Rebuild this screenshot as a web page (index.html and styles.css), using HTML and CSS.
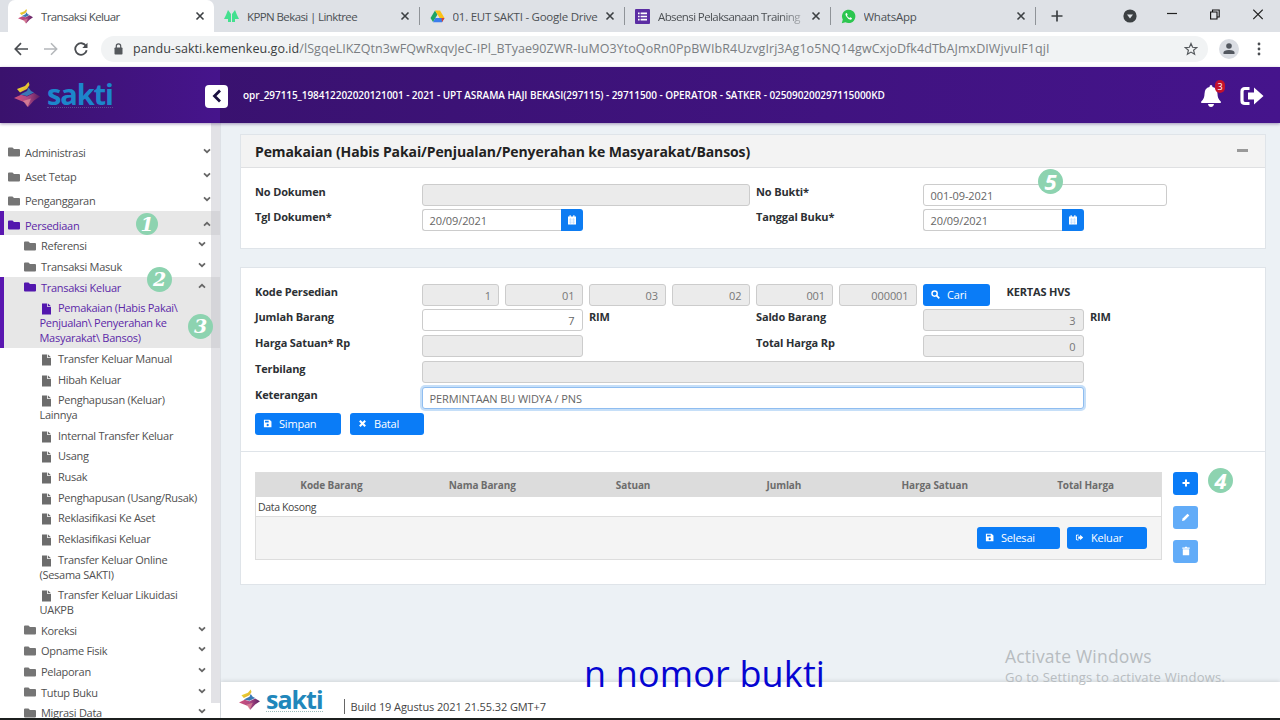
FILE: index.html
```html
<!DOCTYPE html>
<html lang="id">
<head>
    <meta charset="UTF-8">
    <meta name="viewport" content="width=device-width, initial-scale=1.0">
    <title>Transaksi Keluar</title>
    <link rel="stylesheet" href="styles.css">
</head>
<body>

    <!-- icons -->
    <svg class="sprite">
        <defs>
            <linearGradient id="logo-top" x1="0" y1="0" x2="1" y2="1">
                <stop offset="0" stop-color="#f6f03a"/>
                <stop offset="1" stop-color="#d8a02c"/>
            </linearGradient>
            <linearGradient id="logo-base" x1="0" y1="0" x2="1" y2="0">
                <stop offset="0" stop-color="#d0507a"/>
                <stop offset="0.5" stop-color="#b04a84"/>
                <stop offset="1" stop-color="#5a1e62"/>
            </linearGradient>
        </defs>
        <symbol id="logo" viewBox="0 0 26 26">
            <path d="M3 7 L11 4 L14.500 0 L15.500 3 L13 7 L6 10.500 Z" fill="url(#logo-top)"/>
            <path d="M14.500 5.500 L17 9 L20 10.500 L13 14 L6 12.500 L13 9 Z" fill="#3a78b4"/>
            <path d="M0 16 L7 12.800 L13 14.500 L20 11 L26 14.500 L20 18.500 L14 25 L11 20.500 Z" fill="url(#logo-base)"/>
            <path d="M9 19 L17 16.500 L13.500 25 Z" fill="#f0a0a0" opacity="0.55"/>
        </symbol>
        <symbol id="close" viewBox="0 0 10 10"><path d="M1.5 1.5 L8.5 8.5 M8.5 1.5 L1.5 8.5" stroke="#3c4043" stroke-width="1.6"/></symbol>
        <symbol id="folder" viewBox="0 0 12 10"><path d="M0 1.5 Q0 .5 1 .5 H4.5 L6 2 H11 Q12 2 12 3 V8.5 Q12 9.5 11 9.5 H1 Q0 9.5 0 8.5 Z" fill="currentColor"/></symbol>
        <symbol id="file" viewBox="0 0 9 12"><path d="M0 .5 H5.2 V4 H9 V11.5 H0 Z M6 .5 L9 3.3 H6 Z" fill="currentColor"/></symbol>
        <symbol id="down" viewBox="0 0 8 6"><path d="M1 1.3 L4 4.2 L7 1.3" fill="none" stroke="currentColor" stroke-width="1.7"/></symbol>
        <symbol id="up" viewBox="0 0 8 6"><path d="M1 4.7 L4 1.8 L7 4.7" fill="none" stroke="currentColor" stroke-width="1.7"/></symbol>
        <symbol id="calendar" viewBox="0 0 10 10"><path d="M1 1.5 H2.5 V.3 H3.8 V1.5 H6.2 V.3 H7.5 V1.5 H9 V9.5 H1 Z" fill="#fff"/><path d="M2 4.3 H8 M2 6 H8 M2 7.7 H8 M3.5 3 V9 M6.5 3 V9" stroke="#9cccff" stroke-width=".4"/></symbol>
        <symbol id="save" viewBox="0 0 10 10"><path fill-rule="evenodd" d="M1 .8 H7.3 L9.4 2.8 V9.2 H1 Z M2.3 2 V4 H6.3 V2 Z M5.2 5.4 A1.3 1.3 0 1 0 5.21 5.4 Z" fill="#fff"/></symbol>
        <symbol id="times" viewBox="0 0 10 10"><path d="M2 2 L8 8 M8 2 L2 8" stroke="#fff" stroke-width="2.3"/></symbol>
        <symbol id="search" viewBox="0 0 10 10"><circle cx="4" cy="4" r="2.9" fill="none" stroke="#fff" stroke-width="1.6"/><path d="M6 6 L9.2 9.2" stroke="#fff" stroke-width="1.9"/></symbol>
        <symbol id="signout" viewBox="0 0 24 20"><path d="M9.500 2.500 H5 Q2 2.500 2 5.500 V14.500 Q2 17.500 5 17.500 H9.500" fill="none" stroke="#fff" stroke-width="3.2"/><path d="M8 6.500 H14 V1.500 L23.500 10 L14 18.500 V13.500 H8 Z" fill="#fff"/></symbol>
    </svg>

    <!-- browser -->
    <div class="tabs">
        <div class="tab active">
            <svg class="tab-icon"><use href="#logo"/></svg>
            <span class="tab-title narrow">Transaksi Keluar</span>
            <svg class="tab-close"><use href="#close"/></svg>
        </div>
        <div class="tab">
            <svg class="tab-icon" viewBox="0 0 15 15"><path d="M4 1 L7 5 V13 H4 V10 H0 L2 6 Z M11 1 L8 5 V13 H11 V10 H15 L13 6 Z" fill="#43e08f"/></svg>
            <span class="tab-title narrow">KPPN Bekasi | Linktree</span>
            <svg class="tab-close"><use href="#close"/></svg>
        </div>
        <div class="tab">
            <svg class="tab-icon" viewBox="0 0 15 15"><path d="M5 1.5 L7.5 5.5 L3 13 L.5 9 Z" fill="#1fa463"/><path d="M5 1.5 H10 L14.5 9 H9.6 Z" fill="#fbc116"/><path d="M5.3 9 H14.5 L12 13.3 H3 Z" fill="#3b7ded"/><path d="M11.5 9 H14.5 L12 13.3 Z" fill="#e0402f"/></svg>
            <span class="tab-title">01. EUT SAKTI - Google Drive</span>
            <svg class="tab-close"><use href="#close"/></svg>
        </div>
        <div class="tab">
            <svg class="tab-icon" viewBox="0 0 15 15"><rect width="15" height="15" rx="1" fill="#5b2da3"/><path d="M3 4.3 H4.6 M3 7.5 H4.6 M3 10.7 H4.6 M5.6 4.3 H12 M5.6 7.5 H12 M5.6 10.7 H12" stroke="#fff" stroke-width="1.7"/></svg>
            <span class="tab-title narrow fade">Absensi Pelaksanaan Training</span>
            <svg class="tab-close"><use href="#close"/></svg>
        </div>
        <div class="tab">
            <svg class="tab-icon" viewBox="0 0 15 15"><path d="M.8 14.2 L1.8 10.6 A6.7 6.7 0 1 1 4.4 13.2 Z" fill="#2cc64f"/><path d="M5 4 Q3.8 5 5 7 Q7 10.4 9.6 10.8 Q11 10.6 11 9.2 L9.3 8.2 L8.4 9 Q6.8 8.2 6 6.7 L6.6 5.8 L6 4.2 Z" fill="#fff"/></svg>
            <span class="tab-title">WhatsApp</span>
            <svg class="tab-close"><use href="#close"/></svg>
        </div>
        <svg class="new-tab" viewBox="0 0 12 12"><path d="M6 .5 V11.5 M.5 6 H11.5" stroke="#3c4043" stroke-width="1.7"/></svg>
        <div class="window-buttons">
            <svg width="14" height="14" viewBox="0 0 14 14"><circle cx="7" cy="7" r="6.6" fill="#3c4043"/><path d="M4 5.5 H10 L7 9.5 Z" fill="#dee1e6"/></svg>
            <svg width="10" height="14" viewBox="0 0 10 14"><path d="M0 4.500 H10" stroke="#222" stroke-width="1.2"/></svg>
            <svg width="10" height="14" viewBox="0 0 10 14"><path d="M.6 3 H7 V10 H.6 Z M2.5 3 V1 H9.2 V8 H7" fill="none" stroke="#111" stroke-width="1.1"/></svg>
            <svg width="10" height="14" viewBox="0 0 10 14"><path d="M.3 .7 L9.7 10 M9.7 .7 L.3 10" stroke="#222" stroke-width="1.1"/></svg>
        </div>
    </div>

    <div class="toolbar">
        <svg class="nav-icon" viewBox="0 0 14 14"><path d="M14 7 H1.5 M7 1.2 L1.3 7 L7 12.8" fill="none" stroke="#4a4d51" stroke-width="1.7"/></svg>
        <svg class="nav-icon" viewBox="0 0 14 14"><path d="M0 7 H12.5 M7 1.2 L12.7 7 L7 12.8" fill="none" stroke="#b4b7ba" stroke-width="1.5"/></svg>
        <svg class="nav-icon" viewBox="0 0 14 14"><path d="M12 4 A5.8 5.8 0 1 0 12.7 8.3" fill="none" stroke="#4a4d51" stroke-width="1.8"/><path d="M13.5 .8 V6 H8.3 Z" fill="#4a4d51"/></svg>
        <div class="address">
            <svg class="lock" viewBox="0 0 9 12"><rect x=".5" y="4.5" width="8" height="7" rx=".8" fill="#54585c"/><path d="M2.3 5 V3 A2.2 2.2 0 0 1 6.7 3 V5" fill="none" stroke="#54585c" stroke-width="1.2"/></svg>
            <span class="url"><b>pandu-sakti.kemenkeu.go.id</b>/lSgqeLIKZQtn3wFQwRxqvJeC-IPl_BTyae90ZWR-IuMO3YtoQoRn0PpBWIbR4UzvgIrj3Ag1o5NQ14gwCxjoDfk4dTbAJmxDIWjvuIF1qjI</span>
            <svg class="bookmark" viewBox="0 0 14 14"><path d="M7 1.5 L8.6 5.3 L12.7 5.6 L9.6 8.3 L10.6 12.3 L7 10.1 L3.4 12.3 L4.4 8.3 L1.3 5.6 L5.4 5.3 Z" fill="none" stroke="#55595d" stroke-width="1.2"/></svg>
        </div>
        <svg class="profile" viewBox="0 0 20 20"><circle cx="10" cy="10" r="10" fill="#dadde3"/><circle cx="10" cy="7" r="2.8" fill="#52575f"/><path d="M4.5 15 V13.6 Q4.5 11 10 11 Q15.500 11 15.500 13.600 V15 Z" fill="#52575f"/></svg>
        <svg class="dots" viewBox="0 0 4 14"><circle cx="2" cy="2" r="1.4"/><circle cx="2" cy="7" r="1.4"/><circle cx="2" cy="12" r="1.4"/></svg>
    </div>

    <!-- app header -->
    <header class="navbar">
        <div class="brand">
            <svg class="brand-icon"><use href="#logo"/></svg>
            <span class="brand-name">sakti</span>
        </div>
        <button class="collapse"><svg viewBox="0 0 10 14"><path d="M8 1.5 L2.500 7 L8 12.5" fill="none" stroke="#1a1040" stroke-width="2.8"/></svg></button>
        <span class="user-info">opr_297115_198412202020121001 - 2021 - UPT ASRAMA HAJI BEKASI(297115) - 29711500 - OPERATOR - SATKER - 025090200297115000KD</span>
        <div class="bell">
            <svg viewBox="0 0 20 22"><path d="M10 0 Q11.500 0 11.500 2 Q16.500 3 16.500 9 Q16.500 14 19.800 16.500 V18 H.2 V16.500 Q3.500 14 3.500 9 Q3.500 3 8.500 2 Q8.500 0 10 0 Z M7 19 H13 Q12.500 22 10 22 Q7.500 22 7 19 Z" fill="#fff"/></svg>
            <span class="count">3</span>
        </div>
        <svg class="logout"><use href="#signout"/></svg>
    </header>

    <div class="page">
        <nav class="sidebar">
            <ul class="menu">
                <li class="row"><svg class="folder"><use href="#folder"/></svg>Administrasi<svg class="arrow"><use href="#down"/></svg></li>
                <li class="row"><svg class="folder"><use href="#folder"/></svg>Aset Tetap<svg class="arrow"><use href="#down"/></svg></li>
                <li class="row"><svg class="folder"><use href="#folder"/></svg>Penganggaran<svg class="arrow"><use href="#down"/></svg></li>
                <li class="row selected"><svg class="folder"><use href="#folder"/></svg>Persediaan<svg class="arrow"><use href="#up"/></svg></li>
            </ul>
            <ul class="submenu">
                <li class="row"><svg class="folder"><use href="#folder"/></svg>Referensi<svg class="arrow"><use href="#down"/></svg></li>
                <li class="row"><svg class="folder"><use href="#folder"/></svg>Transaksi Masuk<svg class="arrow"><use href="#down"/></svg></li>
                <li class="row selected"><svg class="folder"><use href="#folder"/></svg>Transaksi Keluar<svg class="arrow"><use href="#up"/></svg></li>
                <li class="leaf selected"><svg class="file"><use href="#file"/></svg>Pemakaian (Habis Pakai\<br>Penjualan\ Penyerahan ke<br>Masyarakat\ Bansos)</li>
                <li class="leaf"><svg class="file"><use href="#file"/></svg>Transfer Keluar Manual</li>
                <li class="leaf"><svg class="file"><use href="#file"/></svg>Hibah Keluar</li>
                <li class="leaf"><svg class="file"><use href="#file"/></svg>Penghapusan (Keluar)<br>Lainnya</li>
                <li class="leaf"><svg class="file"><use href="#file"/></svg>Internal Transfer Keluar</li>
                <li class="leaf"><svg class="file"><use href="#file"/></svg>Usang</li>
                <li class="leaf"><svg class="file"><use href="#file"/></svg>Rusak</li>
                <li class="leaf"><svg class="file"><use href="#file"/></svg>Penghapusan (Usang/Rusak)</li>
                <li class="leaf"><svg class="file"><use href="#file"/></svg>Reklasifikasi Ke Aset</li>
                <li class="leaf"><svg class="file"><use href="#file"/></svg>Reklasifikasi Keluar</li>
                <li class="leaf"><svg class="file"><use href="#file"/></svg>Transfer Keluar Online<br>(Sesama SAKTI)</li>
                <li class="leaf"><svg class="file"><use href="#file"/></svg>Transfer Keluar Likuidasi<br>UAKPB</li>
                <li class="row"><svg class="folder"><use href="#folder"/></svg>Koreksi<svg class="arrow"><use href="#down"/></svg></li>
                <li class="row"><svg class="folder"><use href="#folder"/></svg>Opname Fisik<svg class="arrow"><use href="#down"/></svg></li>
                <li class="row"><svg class="folder"><use href="#folder"/></svg>Pelaporan<svg class="arrow"><use href="#down"/></svg></li>
                <li class="row"><svg class="folder"><use href="#folder"/></svg>Tutup Buku<svg class="arrow"><use href="#down"/></svg></li>
                <li class="row"><svg class="folder"><use href="#folder"/></svg>Migrasi Data<svg class="arrow"><use href="#down"/></svg></li>
            </ul>
            <div class="scrollbar"></div>
        </nav>

        <div class="main">
            <div class="content">
                <section class="card">
                    <div class="card-header">
                        <h1>Pemakaian (Habis Pakai/Penjualan/Penyerahan ke Masyarakat/Bansos)</h1>
                        <span class="minus"></span>
                    </div>
                    <div class="form form-top">
                        <label class="w2">No Dokumen</label>
                        <div class="input w4 disabled"></div>
                        <label class="w2">No Bukti*</label>
                        <div class="input w3">001-09-2021</div>
                        <label class="w2 new-row">Tgl Dokumen*</label>
                        <div class="date w4"><div class="input">20/09/2021</div><button class="pick"><svg><use href="#calendar"/></svg></button></div>
                        <label class="w2">Tanggal Buku*</label>
                        <div class="date w4"><div class="input">20/09/2021</div><button class="pick"><svg><use href="#calendar"/></svg></button></div>
                    </div>
                </section>

                <section class="card detail">
                    <div class="form">
                        <label class="w2">Kode Persedian</label>
                        <div class="input disabled num">1</div>
                        <div class="input disabled num">01</div>
                        <div class="input disabled num">03</div>
                        <div class="input disabled num">02</div>
                        <div class="input disabled num">001</div>
                        <div class="input disabled num">000001</div>
                        <button class="btn cari"><svg><use href="#search"/></svg>Cari</button>
                        <label class="w3">KERTAS HVS</label>

                        <label class="w2 new-row">Jumlah Barang</label>
                        <div class="input w2 num">7</div>
                        <label class="w2">RIM</label>
                        <label class="w2">Saldo Barang</label>
                        <div class="input w2 disabled num">3</div>
                        <label class="w2">RIM</label>

                        <label class="w2 new-row">Harga Satuan* Rp</label>
                        <div class="input w2 disabled"></div>
                        <label class="w2"></label>
                        <label class="w2">Total Harga Rp</label>
                        <div class="input w2 disabled num">0</div>

                        <label class="w2 new-row">Terbilang</label>
                        <div class="input w8 disabled"></div>

                        <label class="w2 new-row">Keterangan</label>
                        <div class="input w8 focus">PERMINTAAN BU WIDYA / PNS</div>
                    </div>
                    <div class="actions">
                        <button class="btn simpan"><svg><use href="#save"/></svg>Simpan</button>
                        <button class="btn batal"><svg><use href="#times"/></svg>Batal</button>
                    </div>
                    <div class="table-area">
                        <div class="table">
                            <div class="thead">
                                <span>Kode Barang</span>
                                <span>Nama Barang</span>
                                <span>Satuan</span>
                                <span>Jumlah</span>
                                <span>Harga Satuan</span>
                                <span>Total Harga</span>
                            </div>
                            <div class="empty">Data Kosong</div>
                            <div class="tfoot">
                                <button class="btn selesai"><svg><use href="#save"/></svg>Selesai</button>
                                <button class="btn keluar"><svg viewBox="-2 -2 28 24"><use href="#signout" width="24" height="20"/></svg>Keluar</button>
                            </div>
                        </div>
                        <div class="tools">
                            <button class="tool"><svg viewBox="0 0 10 10"><path d="M5 1.500 V8.500 M1.500 5 H8.500" stroke="#fff" stroke-width="2"/></svg></button>
                            <button class="tool off"><svg viewBox="0 0 10 10"><path d="M1 9 L1.600 6.600 L6.500 1.800 L8.300 3.500 L3.400 8.400 Z" fill="#fff"/></svg></button>
                            <button class="tool off"><svg viewBox="0 0 10 10"><path d="M1.300 1.500 H3.800 L4.200 .8 H5.800 L6.200 1.500 H8.700 V2.700 H1.300 Z M1.800 3.200 H8.200 V9.300 H1.800 Z" fill="#fff"/></svg></button>
                        </div>
                    </div>
                </section>
            </div>

            <footer class="footer">
                <svg class="footer-icon"><use href="#logo"/></svg>
                <span class="footer-name">sakti</span>
                <span class="build">Build 19 Agustus 2021 21.55.32 GMT+7</span>
            </footer>
        </div>
    </div>
    <div class="taskbar"></div>

    <!-- tutorial overlay -->
    <span class="step serif step1">1</span>
    <span class="step serif step2">2</span>
    <span class="step serif step3">3</span>
    <span class="step step4">4</span>
    <span class="step step5">5</span>
    <div class="caption">n nomor bukti</div>
    <div class="watermark">
        <div class="watermark-title">Activate Windows</div>
        <div class="watermark-text">Go to Settings to activate Windows.</div>
    </div>

</body>
</html>
```
FILE: styles.css
```css
* {
    box-sizing: border-box;
}

body {
    position: relative;
    display: flex;
    flex-direction: column;
    width: 1280px;
    height: 720px;
    margin: 0;
    overflow: hidden;
    font-family: "Open Sans", "Noto Sans", sans-serif;
    font-size: 11px;
    color: #444;
    background: #ecf1f5;
}

svg {
    flex: none;
    display: block;
}

button {
    border: none;
    padding: 0;
    font-family: inherit;
}

ul {
    list-style: none;
    margin: 0;
    padding: 0;
}

.sprite {
    position: absolute;
    width: 0;
    height: 0;
}

/* browser tabs */
.tabs {
    flex: none;
    display: flex;
    align-items: center;
    height: 32px;
    padding-left: 8px;
    background: #dee1e6;
}

.tab {
    display: flex;
    align-items: center;
    width: 205.5px;
    height: 18px;
    padding: 0 9px 0 10px;
    border-right: 1px solid #8f9398;
    color: #4c5054;
}

.tab.active {
    width: 206px;
    height: 32px;
    background: #fff;
    border: none;
    border-radius: 7px 7px 0 0;
}

.tab-icon {
    width: 15px;
    height: 15px;
    margin-right: 8px;
}

.tab-title {
    flex: 1;
    white-space: nowrap;
    overflow: hidden;
    font-size: 11.5px;
    letter-spacing: -0.25px;
}

.tab-title.narrow {
    letter-spacing: -0.6px;
}

.tab-title.fade {
    -webkit-mask-image: linear-gradient(to right, #000 82%, rgba(0, 0, 0, 0.2));
    mask-image: linear-gradient(to right, #000 82%, rgba(0, 0, 0, 0.2));
}

.tab-close {
    width: 10px;
    height: 10px;
    margin-left: 5px;
}

.new-tab {
    width: 12px;
    height: 12px;
    margin-left: 15px;
}

.window-buttons {
    display: flex;
    gap: 33px;
    margin-left: auto;
    padding-right: 17px;
}

.window-buttons svg:first-child {
    margin-right: -3px;
}

/* address bar */
.toolbar {
    flex: none;
    display: flex;
    align-items: center;
    height: 35px;
    padding: 0 18px 2px 14px;
    background: #fff;
}

.nav-icon {
    width: 14px;
    height: 14px;
    margin-right: 16px;
}

.address {
    display: flex;
    align-items: center;
    width: 1107px;
    height: 26px;
    margin-left: -3px;
    padding: 0 10px 0 13px;
    border-radius: 13px;
    background: #f1f3f4;
}

.lock {
    width: 9px;
    height: 12px;
    margin-right: 10px;
}

.url {
    flex: 1;
    font-size: 12.5px;
    letter-spacing: 0.06px;
    white-space: nowrap;
    color: #7a7e82;
}

.url b {
    font-weight: 400;
    color: #3a3d40;
}

.bookmark {
    width: 14px;
    height: 14px;
}

.profile {
    width: 20px;
    height: 20px;
    margin-left: 11px;
}

.dots {
    width: 4px;
    height: 14px;
    margin-left: 18px;
    fill: #4a4d51;
}

/* app header */
.navbar {
    flex: none;
    display: flex;
    align-items: center;
    height: 56px;
    padding: 2px 16px 0 0;
    background: linear-gradient(to right, #37116a, #45148c);
    position: relative;
    z-index: 2;
    box-shadow: 0 1px 3px rgba(40, 10, 90, 0.4);
}

.brand {
    display: flex;
    align-items: center;
    width: 220px;
    height: 56px;
    margin-top: -2px;
    padding-left: 14px;
    background: linear-gradient(to right, #3a126d, #46148c);
}

.brand-icon {
    width: 26px;
    height: 26px;
}

.brand-name {
    margin-left: 7px;
    height: 26px;
    border-bottom: 1px dotted #5a4a92;
    font-size: 29px;
    line-height: 23px;
    font-weight: 700;
    letter-spacing: -1.1px;
    color: #1c86cb;
}

.collapse {
    display: flex;
    align-items: center;
    justify-content: center;
    width: 23px;
    height: 23px;
    margin-left: -15px;
    border-radius: 4px;
    background: #fff;
}

.collapse svg {
    width: 10px;
    height: 14px;
}

.user-info {
    margin-left: 15px;
    padding-bottom: 2px;
    font-size: 10px;
    font-weight: 600;
    letter-spacing: -0.06px;
    white-space: nowrap;
    color: #fff;
}

.bell {
    position: relative;
    margin-left: auto;
}

.bell svg {
    width: 20px;
    height: 22px;
}

.count {
    position: absolute;
    top: -5px;
    right: -4px;
    width: 10px;
    height: 13px;
    border-radius: 5px;
    background: #c4122c;
    color: #fff;
    font-size: 9px;
    line-height: 13px;
    text-align: center;
}

.logout {
    width: 24px;
    height: 20px;
    margin-left: 19px;
}

.page {
    flex: 1;
    display: flex;
    min-height: 0;
}

/* sidebar */
.sidebar {
    position: relative;
    flex: none;
    width: 220px;
    padding-top: 14.5px;
    overflow: hidden;
    background: #fff;
    letter-spacing: -0.28px;
    line-height: 15px;
    color: #505050;
}

.row {
    display: flex;
    align-items: center;
    white-space: nowrap;
}

.menu .row {
    height: 24.35px;
    padding: 5px 9px 0 8px;
}

.submenu {
    padding-top: 0.8px;
}

.submenu .row {
    height: 20.63px;
    padding: 0 14px 0 24px;
}

.folder {
    width: 12px;
    height: 10px;
    margin-right: 5px;
    color: #757575;
}

.arrow {
    width: 8px;
    height: 6px;
    margin: -3px 0 0 auto;
    color: #666;
}

.leaf {
    padding: 2.8px 0 2.83px 39.5px;
    white-space: nowrap;
}

.file {
    display: inline-block;
    width: 9px;
    height: 12px;
    margin: 0 7.5px 0 2px;
    vertical-align: -3px;
    color: #6c6c6c;
}

.selected {
    background: #e7e7e7;
    color: #5c28a8;
    box-shadow: inset 4px 0 #5a17b0;
}

.selected .folder,
.selected .file {
    color: #5317ae;
}

.scrollbar {
    position: absolute;
    top: 0;
    right: 0;
    width: 9px;
    height: 580px;
    background: rgba(190, 190, 200, 0.45);
}

/* content */
.main {
    flex: 1;
    display: flex;
    flex-direction: column;
    border-left: 1px solid #dde1e6;
}

.content {
    flex: 1;
    padding: 11px 14px 0 19px;
}

.card {
    height: 115px;
    background: #fff;
    border: 1px solid #dfe4e9;
}

.card-header {
    display: flex;
    align-items: center;
    justify-content: space-between;
    height: 33px;
    padding: 0 17px 0 14px;
    background: #f3f3f3;
    border-bottom: 1px solid #dfe0e2;
}

h1 {
    margin: 0;
    font-size: 14px;
    font-weight: 700;
    letter-spacing: -0.1px;
    color: #222;
}

.minus {
    width: 11px;
    height: 3px;
    margin-top: -2px;
    background: #999;
}

.form {
    display: grid;
    grid-template-columns: repeat(12, 83.5px);
    grid-auto-rows: 22px;
    row-gap: 3.8px;
    padding: 15.5px 0 0 14px;
}

.form-top {
    row-gap: 3.5px;
}

.w2 { grid-column-end: span 2; }
.w3 { grid-column-end: span 3; }
.w4 { grid-column-end: span 4; }
.w8 { grid-column-end: span 8; }
.new-row { grid-column-start: 1; }

label {
    font-size: 11px;
    line-height: 16px;
    font-weight: 700;
    letter-spacing: -0.15px;
    color: #2c3034;
}

.input {
    margin: 0 6.5px 0 -0.5px;
    height: 22px;
    padding: 0 7px;
    border: 1px solid #ccc;
    border-radius: 3px;
    background: #fff;
    line-height: 21px;
    letter-spacing: -0.1px;
    color: #666;
}

.disabled {
    background: #ebebeb;
    color: #777;
}

.num {
    text-align: right;
}

.focus {
    border-color: #8fbdf0;
    box-shadow: 0 0 0 2px #c6dff8;
}

.date {
    display: flex;
    margin-left: -0.5px;
}

.date .input {
    width: 139px;
    margin: 0;
    border-right: none;
    border-radius: 3px 0 0 3px;
}

.pick {
    display: flex;
    align-items: center;
    justify-content: center;
    width: 22px;
    height: 22px;
    border-radius: 0 3px 3px 0;
    background: #0d7cf2;
}

.pick svg {
    width: 10px;
    height: 10px;
}

.btn {
    display: flex;
    align-items: center;
    height: 22px;
    padding-left: 8px;
    border-radius: 3px;
    background: #0a7cf7;
    color: #fff;
    font-size: 11px;
    letter-spacing: -0.2px;
}

.btn svg {
    width: 9px;
    height: 9px;
    margin-right: 7px;
}

.cari { width: 67px; }
.simpan { width: 86px; }
.batal { width: 74px; }
.selesai { width: 83px; }
.keluar { width: 80px; }

.detail {
    height: 318px;
    margin-top: 18px;
}

.actions {
    display: flex;
    gap: 9px;
    padding: 4px 14px 16px;
    border-bottom: 1px solid #dfe4e9;
}

.table-area {
    display: flex;
    gap: 11px;
    padding: 20px 0 0 14px;
}

.table {
    width: 907px;
    height: 88px;
    border: 1px solid #ddd;
    background: #f4f4f4;
}

.thead {
    display: grid;
    grid-template-columns: repeat(6, 1fr);
    height: 24px;
    background: #dcdcdc;
    line-height: 24px;
    text-align: center;
    font-size: 10px;
    font-weight: 700;
    letter-spacing: -0.1px;
    color: #6c6c6c;
}

.empty {
    height: 20px;
    padding-left: 2px;
    border-bottom: 1px solid #ddd;
    background: #fff;
    font-size: 10.5px;
    line-height: 20px;
    letter-spacing: -0.35px;
}

.tfoot {
    display: flex;
    justify-content: flex-end;
    gap: 7px;
    padding: 10px 14px 0 0;
}

.tools {
    display: flex;
    flex-direction: column;
    gap: 11px;
}

.tool {
    display: flex;
    align-items: center;
    justify-content: center;
    width: 25px;
    height: 23px;
    border-radius: 3px;
    background: #0a7cf7;
}

.tool svg {
    width: 10px;
    height: 10px;
}

.off {
    background: #62acf8;
}

/* footer */
.footer {
    flex: none;
    display: flex;
    align-items: center;
    height: 36px;
    padding-left: 18px;
    background: #fff;
    box-shadow: 0 -1px 4px rgba(0, 0, 0, 0.12);
}

.footer-icon {
    width: 21px;
    height: 22px;
}

.footer-name {
    height: 23px;
    margin-left: 6px;
    border-bottom: 1px dotted #9bb;
    font-size: 25px;
    line-height: 20px;
    font-weight: 700;
    letter-spacing: -1px;
    color: #2187bb;
}

.build {
    height: 15px;
    margin: 13px 0 0 21px;
    padding-left: 6px;
    border-left: 1px solid #666;
    line-height: 15px;
    letter-spacing: -0.1px;
}

.taskbar {
    flex: none;
    height: 2px;
    background: #1c1f1e;
}

/* overlay */
.step {
    position: absolute;
    z-index: 3;
    width: 25px;
    height: 25px;
    border-radius: 50%;
    background: #8dd3b0;
    color: #fff;
    font-size: 22px;
    font-weight: 700;
    font-style: italic;
    line-height: 24px;
    text-align: center;
}

.serif {
    font-family: "DejaVu Serif", serif;
    font-size: 19px;
}

.step1 { left: 136px; top: 213px; width: 22px; height: 22px; line-height: 22px; }
.step2 { left: 147px; top: 267px; }
.step3 { left: 188px; top: 314px; }
.step4 { left: 1208px; top: 468px; }
.step5 { left: 1038px; top: 169px; }

.caption {
    position: absolute;
    z-index: 3;
    left: 584px;
    top: 649px;
    font-size: 36px;
    line-height: 50px;
    letter-spacing: 0.15px;
    white-space: nowrap;
    color: #0505d2;
}

.watermark {
    position: absolute;
    z-index: 3;
    left: 1005px;
    top: 645px;
    white-space: nowrap;
    color: #b7bcc0;
}

.watermark-title {
    font-size: 17.5px;
    line-height: 23px;
    letter-spacing: 0.2px;
}

.watermark-text {
    font-size: 13px;
    line-height: 19px;
    letter-spacing: 0.2px;
}
```
